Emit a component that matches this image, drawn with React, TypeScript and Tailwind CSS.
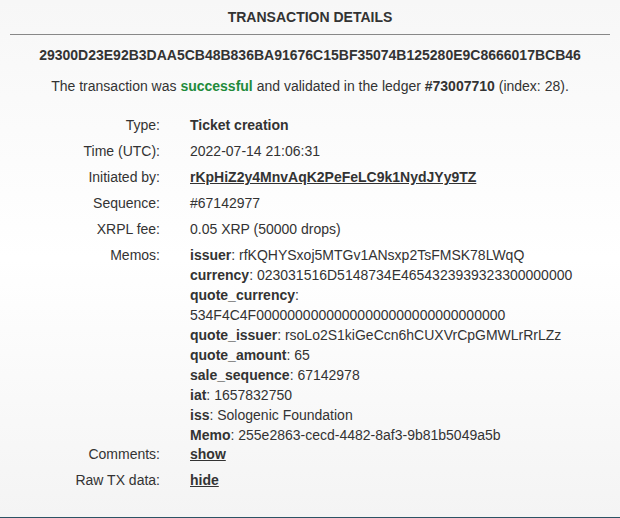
import React from 'react';

const memos: [string, string][] = [
  ['issuer', 'rfKQHYSxoj5MTGv1ANsxp2TsFMSK78LWqQ'],
  ['currency', '023031516D5148734E4654323939323300000000'],
  ['quote_currency', ''],
  ['quote_issuer', 'rsoLo2S1kiGeCcn6hCUXVrCpGMWLrRrLZz'],
  ['quote_amount', '65'],
  ['sale_sequence', '67142978'],
  ['iat', '1657832750'],
  ['iss', 'Sologenic Foundation'],
  ['Memo', '255e2863-cecd-4482-8af3-9b81b5049a5b'],
];

function Row({ label, children, className = 'py-[3px]' }: { label: string; children: React.ReactNode; className?: string }) {
  return (
    <div className={`flex ${className}`}>
      <div className="w-[160px] shrink-0 text-right">{label}</div>
      <div className="pl-[30px]">{children}</div>
    </div>
  );
}

export default function App() {
  return (
    <div
      className="h-[518px] w-[620px] overflow-hidden border-b border-[#2c5364] bg-linear-to-b from-[#f7f7f7] via-white to-[#f4f4f4] text-[14px] leading-5 text-[#333]"
      style={{ fontFamily: '"Liberation Sans", Arial, sans-serif' }}
    >
      <div className="px-[10px]">
        <h1 className="border-b border-[#888] pt-[7px] pb-[7px] text-center text-[14px] font-bold">TRANSACTION DETAILS</h1>
      </div>
      <div className="pt-[10px] text-center font-bold">29300D23E92B3DAA5CB48B836BA91676C15BF35074B125280E9C8666017BCB46</div>
      <div className="pt-[11px] text-center">
        The transaction was <b className="text-[#1f8b3b]">successful</b> and validated in the ledger <b>#73007710</b> (index: 28).
      </div>
      <div className="pt-[16px]">
        <Row label="Type:">
          <b>Ticket creation</b>
        </Row>
        <Row label="Time (UTC):">2022-07-14 21:06:31</Row>
        <Row label="Initiated by:">
          <a className="font-bold underline">rKpHiZ2y4MnvAqK2PeFeLC9k1NydJYy9TZ</a>
        </Row>
        <Row label="Sequence:">#67142977</Row>
        <Row label="XRPL fee:">0.05 XRP (50000 drops)</Row>
        <Row label="Memos:" className="pt-[3px]">
          {memos.map(([k, v]) =>
            k === 'quote_currency' ? (
              <React.Fragment key={k}>
                <div>
                  <b>{k}</b>:
                </div>
                <div>534F4C4F00000000000000000000000000000000</div>
              </React.Fragment>
            ) : (
              <div key={k}>
                <b>{k}</b>: {v}
              </div>
            )
          )}
        </Row>
        <Row label="Comments:" className="-mt-px pb-[3px]">
          <a className="font-bold underline">show</a>
        </Row>
        <Row label="Raw TX data:">
          <a className="font-bold underline">hide</a>
        </Row>
      </div>
    </div>
  );
}
